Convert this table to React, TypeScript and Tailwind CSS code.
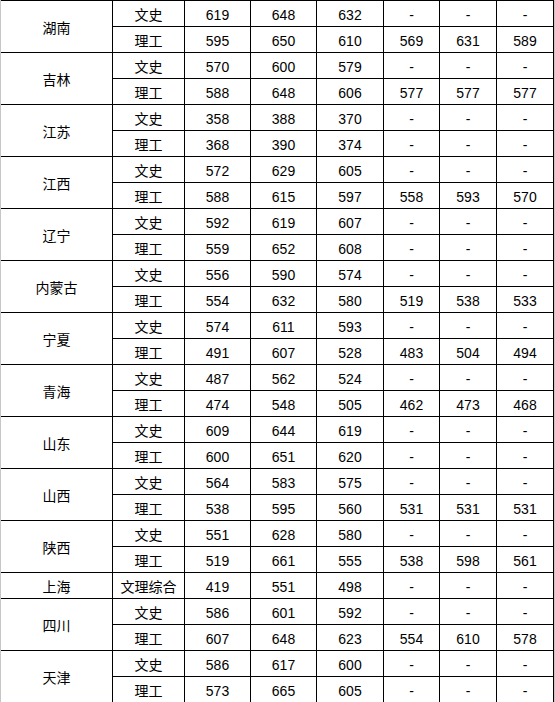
import React from "react";

type Row = [string, string, string, string, string, string, string];
type Group = { name: string; rows: Row[] };

const data: Group[] = [
  { name: "湖南", rows: [["文史", "619", "648", "632", "-", "-", "-"], ["理工", "595", "650", "610", "569", "631", "589"]] },
  { name: "吉林", rows: [["文史", "570", "600", "579", "-", "-", "-"], ["理工", "588", "648", "606", "577", "577", "577"]] },
  { name: "江苏", rows: [["文史", "358", "388", "370", "-", "-", "-"], ["理工", "368", "390", "374", "-", "-", "-"]] },
  { name: "江西", rows: [["文史", "572", "629", "605", "-", "-", "-"], ["理工", "588", "615", "597", "558", "593", "570"]] },
  { name: "辽宁", rows: [["文史", "592", "619", "607", "-", "-", "-"], ["理工", "559", "652", "608", "-", "-", "-"]] },
  { name: "内蒙古", rows: [["文史", "556", "590", "574", "-", "-", "-"], ["理工", "554", "632", "580", "519", "538", "533"]] },
  { name: "宁夏", rows: [["文史", "574", "611", "593", "-", "-", "-"], ["理工", "491", "607", "528", "483", "504", "494"]] },
  { name: "青海", rows: [["文史", "487", "562", "524", "-", "-", "-"], ["理工", "474", "548", "505", "462", "473", "468"]] },
  { name: "山东", rows: [["文史", "609", "644", "619", "-", "-", "-"], ["理工", "600", "651", "620", "-", "-", "-"]] },
  { name: "山西", rows: [["文史", "564", "583", "575", "-", "-", "-"], ["理工", "538", "595", "560", "531", "531", "531"]] },
  { name: "陕西", rows: [["文史", "551", "628", "580", "-", "-", "-"], ["理工", "519", "661", "555", "538", "598", "561"]] },
  { name: "上海", rows: [["文理综合", "419", "551", "498", "-", "-", "-"]] },
  { name: "四川", rows: [["文史", "586", "601", "592", "-", "-", "-"], ["理工", "607", "648", "623", "554", "610", "578"]] },
  { name: "天津", rows: [["文史", "586", "617", "600", "-", "-", "-"], ["理工", "573", "665", "605", "-", "-", "-"]] },
];

const widths = ["w-[72px]", "w-[66px]", "w-[66px]", "w-[67px]", "w-[56px]", "w-[57px]", "w-[57px]"];

export default function App() {
  return (
    <div
      className="w-[555px] h-[702px] overflow-hidden bg-white text-black text-[14px] leading-none"
      style={{ fontFamily: '"Liberation Sans", "Noto Sans CJK SC", sans-serif' }}
    >
      <div className="flex flex-col border-l border-l-[#c6c6c6] w-[555px]">
        {data.map((g) => (
          <div key={g.name} className="flex">
            <div className="w-[112px] shrink-0 border-t border-r border-black flex items-center justify-center pt-[2px]">
              {g.name}
            </div>
            <div className="flex flex-col">
              {g.rows.map((r, i) => (
                <div key={i} className="flex h-[26px]">
                  {r.map((c, j) => (
                    <div
                      key={j}
                      className={`${widths[j]} shrink-0 h-[26px] border-t border-r border-black flex items-center justify-center pt-[2px]`}
                    >
                      {c}
                    </div>
                  ))}
                </div>
              ))}
            </div>
            <div className="w-[1px] bg-[#c6c6c6]" />
          </div>
        ))}
      </div>
    </div>
  );
}
